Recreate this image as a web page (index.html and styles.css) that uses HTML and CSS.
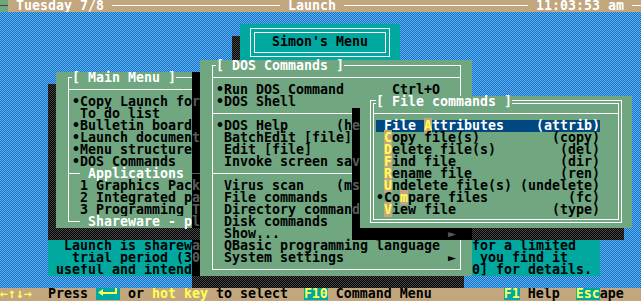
FILE: index.html
```html
<!DOCTYPE html>
<html>
<head>
<meta charset="utf-8">
<title>Launch</title>
<link rel="stylesheet" href="styles.css">
</head>
<body>
<div class="screen">
  <div class="bar top"><span class="tl"></span> Tuesday 7/8 <span class="hl n21"></span> Launch <span class="hl n23"></span> 11:03:53 am <span class="hl nlast"></span></div>

  <div class="desktop">
    <div class="shadow simon-sh"></div>
    <div class="simon">
      <div class="dbox"><div class="dbox-in">Simon's Menu</div></div>
    </div>

    <div class="info">
      <div class="irow"><span class="il">  Launch is sharew</span><span class="ir">for a limited</span></div>
      <div class="irow"><span class="il">   trial period (3</span><span class="ir"> you find it</span></div>
      <div class="irow"><span class="il"> useful and intend</span><span class="ir">0] for details.</span></div>
    </div>

    <div class="shadow main-sh"></div>
    <div class="win main">
      <div class="frame">
        <div class="sep"></div>
        <div class="ln">•Copy Launch fo</div>
        <div class="ln"> To do list</div>
        <div class="ln">•Bulletin board</div>
        <div class="ln">•Launch documen</div>
        <div class="ln">•Menu structure</div>
        <div class="ln">•DOS Commands</div>
        <div class="sep"><span class="lbl"> Applications </span></div>
        <div class="ln"> 1 Graphics Pac</div>
        <div class="ln"> 2 Integrated p</div>
        <div class="ln"> 3 Programming</div>
      </div>
      <div class="title main-title">[ Main Menu ]</div>
      <div class="title main-foot"> Shareware - p</div>
    </div>

    <div class="shadow dos-sh">
      <div class="scol">
        <span class="on"> </span>
        <span class="on"> </span>
        <span class="on">r</span>
        <span class="on"> </span>
        <span class="on"> </span>
        <span class="on">t</span>
        <span class="on"> </span>
        <span class="on"> </span>
        <span class="on gl"></span>
        <span class="on">k</span>
        <span class="on">a</span>
        <span class="on">T</span>
        <span class="on">l</span>
        <span class="off"></span>
        <span class="on">a</span>
        <span class="on">0</span>
        <span class="on"> </span>
      </div>
    </div>
    <div class="win dos">
      <div class="frame">
        <div class="sep"></div>
        <div class="ln">•Run DOS Command      Ctrl+O</div>
        <div class="ln">•DOS Shell</div>
        <div class="sep"></div>
        <div class="ln">•DOS Help      (h</div>
        <div class="ln"> BatchEdit [file]</div>
        <div class="ln"> Edit [file]</div>
        <div class="ln"> Invoke screen sa</div>
        <div class="sep"></div>
        <div class="ln"> Virus scan    (m</div>
        <div class="ln"> File commands</div>
        <div class="ln"> Directory comman</div>
        <div class="ln"> Disk commands</div>
        <div class="ln"> Show...</div>
        <div class="ln"> QBasic programming language</div>
        <div class="ln"> System settings             ►</div>
      </div>
      <div class="title dos-title">[ DOS Commands ]</div>
    </div>

    <div class="shadow file-sh">
      <div class="scol">
        <span class="on"> </span>
        <span class="on">e</span>
        <span class="on"> </span>
        <span class="on"> </span>
        <span class="on">v</span>
        <span class="on"> </span>
        <span class="on">s</span>
        <span class="on"> </span>
        <span class="on">d</span>
        <span class="on"> </span>
      </div>
      <div class="srow">            ►  </div>
    </div>
    <div class="win file">
      <div class="fo">
        <div class="fi">
          <div class="sep"></div>
          <div class="item sel"><span> File <span class="hk">A</span>ttributes</span><span>(attrib)</span></div>
          <div class="item"><span> <span class="hk">C</span>opy file(s)</span><span>(copy)</span></div>
          <div class="item"><span> <span class="hk">D</span>elete file(s)</span><span>(del)</span></div>
          <div class="item"><span> <span class="hk">F</span>ind file</span><span>(dir)</span></div>
          <div class="item"><span> <span class="hk">R</span>ename file</span><span>(ren)</span></div>
          <div class="item"><span> <span class="hk">U</span>ndelete file(s)</span><span>(undelete)</span></div>
          <div class="item"><span>•Co<span class="hk">m</span>pare files</span><span>(fc)</span></div>
          <div class="item"><span> <span class="hk">V</span>iew file</span><span>(type)</span></div>
        </div>
      </div>
      <div class="title file-title">[ File commands ]</div>
    </div>
  </div>

  <div class="bar bottom"> <span class="y">←↑↓→</span>  Press <span class="key"><svg width="24" height="12" viewBox="0 0 24 12"><polygon points="2,4.5 7,1 7,8" fill="#ffff55"/><rect x="6" y="4" width="15" height="2" fill="#ffff55"/><rect x="19" y="0" width="2" height="6" fill="#ffff55"/></svg></span> or <span class="y">hot key</span> to select  <span class="k">F10</span> Command Menu         <span class="k">F1</span> Help  <span class="k">Esc</span>ape </div>
</div>
</body>
</html>
```

FILE: styles.css
```css
* { box-sizing: border-box; margin: 0; padding: 0; }

html, body {
  width: 641px;
  height: 301px;
  overflow: hidden;
}

body {
  background: #c1a67e;
  font: bold 13.29px/12px "DejaVu Sans Mono", monospace;
  color: #000;
}

.screen {
  width: 641px;
  height: 301px;
  display: flex;
  flex-direction: column;
}

/* ---------- top & bottom bars ---------- */
.bar {
  flex: none;
  display: flex;
  align-items: flex-start;
  height: 12px;
  white-space: pre;
  background: #c1a67e;
  color: #fff;
}
.bar.bottom { height: 13px; color: #000; }

.tl {
  width: 8px;
  height: 12px;
  background: linear-gradient(#3c4a40, #3c4a40) 0 5px / 100% 1px no-repeat, #6fa67f;
}
.hl {
  height: 12px;
  background: linear-gradient(#fff, #fff) 0 5px / 100% 1px no-repeat;
}
.n21 { width: 168px; }
.n23 { width: 184px; }
.nlast { width: 9px; }

.y { color: #ffff55; }
.k { color: #ffff55; background: #00a8a0; }
.key { width: 24px; height: 12px; background: #00a8a0; display: block; }
.key svg { display: block; }

/* ---------- desktop ---------- */
.desktop {
  flex: none;
  position: relative;
  height: 276px;
  background: repeating-conic-gradient(#1a6fc4 0 25%, #5ab4f2 0 50%) 0 0 / 2px 2px;
  overflow: hidden;
}

.ln, .title, .il, .ir, .item span, .scol span, .srow, .dbox-in, .lbl {
  white-space: pre;
}

.shadow {
  position: absolute;
  background: repeating-conic-gradient(#000 0 25%, #454545 0 50%) 0 0 / 2px 2px;
  color: #5a5a5a;
  display: flex;
  flex-direction: column;
}
.scol { display: flex; flex-direction: column; width: 8px; }
.scol span { display: block; height: 12px; width: 8px; }
.scol .on { background: #000; }
.scol .gl { background: linear-gradient(#5a5a5a, #5a5a5a) 0 5px / 100% 1px no-repeat, #000; }
.srow { height: 12px; width: 120px; background: #000; }

.simon-sh { left: 232px; top: 24px; width: 160px; height: 36px; }
.main-sh  { left: 48px;  top: 72px; width: 200px; height: 156px; }
.dos-sh   { left: 192px; top: 60px; width: 272px; height: 216px; }
.file-sh  { left: 352px; top: 96px; width: 272px; height: 132px; }

/* Simon's menu */
.simon {
  position: absolute;
  left: 240px; top: 12px;
  width: 160px; height: 36px;
  background: #00a8a0;
  padding: 4px 0 0 10px;
}
.dbox {
  width: 140px; height: 29px;
  border: 1px solid #fff;
  padding: 3px;
}
.dbox-in {
  height: 100%;
  border: 1px solid #fff;
  text-align: center;
  padding-top: 3px;
  color: #000;
}

/* info box */
.info {
  position: absolute;
  left: 48px; top: 228px;
  width: 552px; height: 36px;
  background: #00a8a0;
  color: #000;
}
.irow { display: grid; grid-template-columns: 424px 1fr; height: 12px; }
.il { overflow: hidden; }

/* windows */
.win {
  position: absolute;
  background: #70a680;
  color: #000;
}
.main { left: 56px; top: 60px; width: 200px; height: 156px; }
.dos  { left: 200px; top: 48px; width: 272px; height: 216px; }
.file { left: 360px; top: 84px; width: 272px; height: 132px; }

.frame {
  margin: 5px 0 0 12px;
  border: 1px solid #fff;
  padding: 6px 0 0 3px;
}
.main .frame { width: 190px; height: 145px; }
.dos .frame  { width: 249px; height: 205px; }

.ln { height: 12px; }
.sep {
  height: 12px;
  margin-left: -3px;
  padding-left: 3px;
  background: linear-gradient(#fff, #fff) 0 5px / 100% 1px no-repeat;
}
.lbl { margin-left: 8px; background: #70a680; color: #fff; }

.title {
  position: absolute;
  height: 12px;
  background: #70a680;
  color: #fff;
}
.main-title { left: 16px; top: 0; }
.main-foot  { left: 24px; top: 144px; }
.dos-title  { left: 16px; top: 0; }
.file-title { left: 16px; top: 0; }

/* file commands window */
.fo {
  margin: 4px 0 0 10px;
  width: 252px; height: 123px;
  border: 1px solid #fff;
  padding: 2px;
  display: flex;
  flex-direction: column;
}
.fi {
  flex: 1;
  border: 1px solid #fff;
  padding: 4px 0 0 2px;
}
.fi .sep { margin-left: -2px; padding-left: 2px; }
.item {
  display: flex;
  justify-content: space-between;
  width: 224px;
  height: 12px;
}
.item.sel { background: #00487f; color: #fff; }
.hk { color: #ffff55; background: #c1a67e; }
```
